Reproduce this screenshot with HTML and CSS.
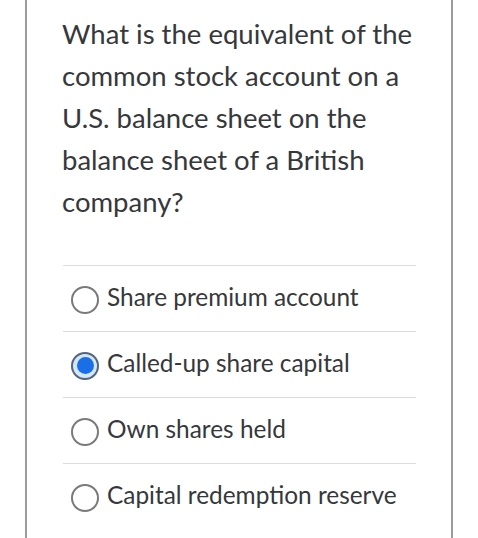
FILE: index.html
```html
<!DOCTYPE html>
<html>
<head>
<meta charset="utf-8">
<link rel="stylesheet" href="styles.css">
</head>
<body>
<div class="card">
  <p class="question">What is the equivalent of the common stock account on a U.S. balance sheet on the balance sheet of a British company?</p>
  <ul class="options">
    <li class="option"><span class="radio"></span><span class="label">Share premium account</span></li>
    <li class="option"><span class="radio checked"><span class="dot"></span></span><span class="label">Called-up share capital</span></li>
    <li class="option"><span class="radio"></span><span class="label">Own shares held</span></li>
    <li class="option"><span class="radio"></span><span class="label">Capital redemption reserve</span></li>
  </ul>
</div>
</body>
</html>
```

FILE: styles.css
```css
html, body {
  margin: 0;
  padding: 0;
  background: #ffffff;
}
body {
  font-family: Lato, "Liberation Sans", sans-serif;
  color: #36383b;
}
.card {
  margin-left: 25px;
  width: 428px;
  min-height: 538px;
  box-sizing: border-box;
  border-left: 2px solid #9c9c9c;
  border-right: 2px solid #9c9c9c;
  padding-top: 13px;
}
.question {
  margin: 0 20px 0 35px;
  font-size: 27.5px;
  line-height: 42px;
}
.options {
  list-style: none;
  margin: 42px 35px 0 36px;
  padding: 0;
}
.option {
  display: flex;
  align-items: center;
  gap: 8px;
  height: 65px;
  border-top: 1px solid #dcdcdc;
  padding-left: 8px;
  font-size: 24.4px;
}
.radio {
  width: 28px;
  height: 28px;
  box-sizing: border-box;
  border: 2px solid #7a7a7a;
  border-radius: 50%;
  display: flex;
  align-items: center;
  justify-content: center;
  flex: none;
  margin-top: 2px;
}
.radio.checked {
  border-color: #55657a;
  background: #d4e6fc;
}
.dot {
  width: 17px;
  height: 17px;
  border-radius: 50%;
  background: #1a6fe6;
}
.label {
  line-height: 30px;
  padding-bottom: 3px;
}
```
